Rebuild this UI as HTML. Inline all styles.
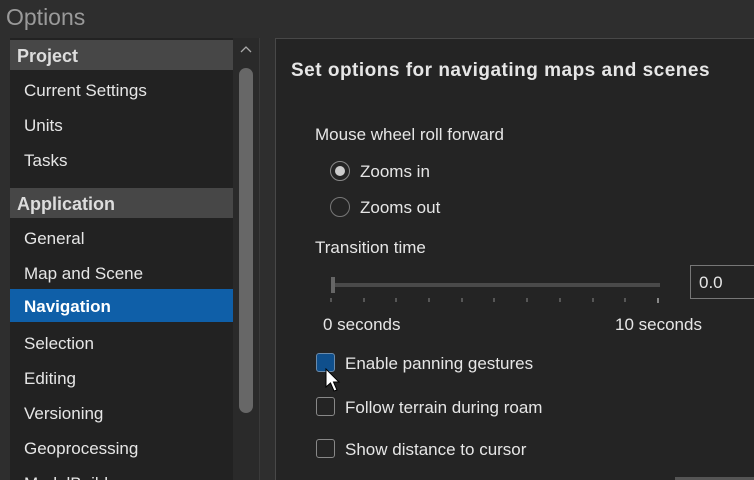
<!DOCTYPE html>
<html style="overflow:hidden;width:754px;height:480px"><head><style>
body{margin:0;width:754px;height:480px;overflow:hidden;background:#2e2e2e;font-family:"Segoe UI","Liberation Sans",sans-serif;color:#e6e6e6;position:relative}
.a{position:absolute;white-space:nowrap}
.it{position:absolute;left:10px;width:223px;height:35px;line-height:37px;font-size:17px;padding-left:14px;box-sizing:border-box}
.hd{position:absolute;left:10px;width:223px;height:30px;line-height:32px;font-size:18px;font-weight:bold;padding-left:7px;box-sizing:border-box;background:#474747;color:#ddd}
.cb{position:absolute;left:316px;width:19px;height:19px;border:1.5px solid #888;border-radius:3px;box-sizing:border-box}
.t{position:absolute;font-size:17px;white-space:nowrap}
</style></head><body>
<div class="a" style="left:6px;top:4px;font-size:23px;color:#9a9a9a">Options</div>
<div class="a" style="left:10px;top:38px;width:223px;height:442px;background:#222"></div>
<div class="a" style="left:233px;top:38px;width:26px;height:442px;background:#2a2a2a;border-right:1px solid #3a3a3a"></div>
<div class="a" style="left:239px;top:68px;width:14px;height:345px;background:#676767;border-radius:7px"></div>
<svg class="a" style="left:240px;top:46px" width="12" height="8"><path d="M1 6 L6 1 L11 6" fill="none" stroke="#aaa" stroke-width="1.3"/></svg>
<div class="hd" style="top:40px">Project</div>
<div class="it" style="top:72px">Current Settings</div>
<div class="it" style="top:107px">Units</div>
<div class="it" style="top:142px">Tasks</div>
<div class="hd" style="top:188px">Application</div>
<div class="it" style="top:220px">General</div>
<div class="it" style="top:255px">Map and Scene</div>
<div class="it" style="top:289px;height:33px;line-height:36px;background:#0f5fa8;font-weight:bold;color:#fff">Navigation</div>
<div class="it" style="top:325px">Selection</div>
<div class="it" style="top:360px">Editing</div>
<div class="it" style="top:395px">Versioning</div>
<div class="it" style="top:430px">Geoprocessing</div>
<div class="it" style="top:465px">ModelBuilder</div>
<div class="a" style="left:275px;top:38px;width:480px;height:442px;background:#242424;border-left:1px solid #484848;border-top:1px solid #484848"></div>
<div class="t" style="left:291px;top:60px;font-size:19px;font-weight:bold;letter-spacing:0.5px">Set options for navigating maps and scenes</div>
<div class="t" style="left:315px;top:125px">Mouse wheel roll forward</div>
<div class="a" style="left:330px;top:161px;width:20px;height:20px;border:1.5px solid #888;border-radius:50%;box-sizing:border-box"></div>
<div class="a" style="left:335px;top:166px;width:10px;height:10px;background:#ccc;border-radius:50%"></div>
<div class="t" style="left:360px;top:162px">Zooms in</div>
<div class="a" style="left:330px;top:197px;width:20px;height:20px;border:1.5px solid #777;border-radius:50%;box-sizing:border-box"></div>
<div class="t" style="left:360px;top:198px">Zooms out</div>
<div class="t" style="left:315px;top:238px">Transition time</div>
<div class="a" style="left:331px;top:283px;width:329px;height:4px;background:#4a4a4a"></div>
<div class="a" style="left:331px;top:277px;width:4px;height:16px;background:#666"></div>
<svg class="a" style="left:330px;top:297px" width="332" height="8"><g stroke="#888" stroke-width="1">
<line x1="1" y1="1" x2="1" y2="5"/><line x1="34" y1="1" x2="34" y2="5"/><line x1="66" y1="1" x2="66" y2="5"/><line x1="99" y1="1" x2="99" y2="5"/><line x1="132" y1="1" x2="132" y2="5"/><line x1="164" y1="1" x2="164" y2="5"/><line x1="197" y1="1" x2="197" y2="5"/><line x1="230" y1="1" x2="230" y2="5"/><line x1="263" y1="1" x2="263" y2="5"/><line x1="295" y1="1" x2="295" y2="5"/><line x1="328" y1="1" x2="328" y2="6" stroke-width="2"/></g></svg>
<div class="t" style="left:323px;top:315px">0 seconds</div>
<div class="t" style="left:615px;top:315px">10 seconds</div>
<div class="a" style="left:690px;top:265px;width:70px;height:34px;border:1px solid #777;box-sizing:border-box;font-size:17px;line-height:34px;padding-left:8px">0.0</div>
<div class="cb" style="top:353px;background:#0f4f8c;border-color:#6a8aaa"></div>
<div class="t" style="left:345px;top:354px">Enable panning gestures</div>
<svg class="a" style="left:325px;top:368px" width="20" height="26"><path d="M1 1 L1 19 L5.5 15 L9 23 L12 22 L8.5 14 L14 14 Z" fill="#fff" stroke="#000" stroke-width="1"/></svg>
<div class="cb" style="top:397px"></div>
<div class="t" style="left:345px;top:398px">Follow terrain during roam</div>
<div class="cb" style="top:439px"></div>
<div class="t" style="left:345px;top:440px">Show distance to cursor</div>
<div class="a" style="left:675px;top:477px;width:80px;height:3px;background:#555"></div>
</body></html>
